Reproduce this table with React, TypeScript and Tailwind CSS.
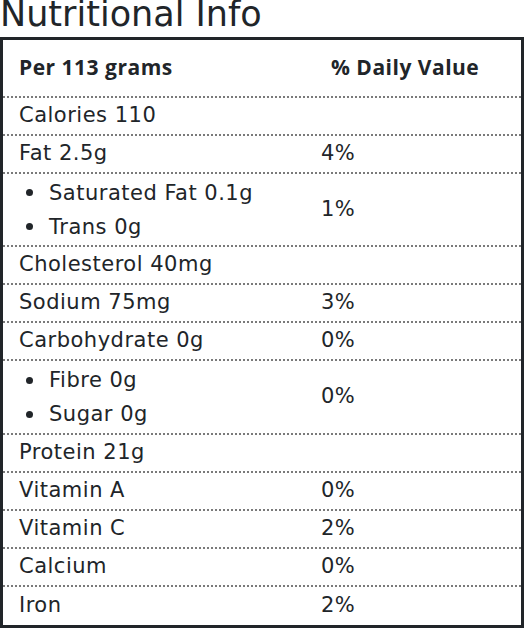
const rows: { name: string; items?: string[]; dv: string; h?: string }[] = [
  { name: "Calories 110", dv: "" },
  { name: "Fat 2.5g", dv: "4%" },
  { name: "", items: ["Saturated Fat 0.1g", "Trans 0g"], dv: "1%", h: "h-[73px]" },
  { name: "Cholesterol 40mg", dv: "" },
  { name: "Sodium 75mg", dv: "3%" },
  { name: "Carbohydrate 0g", dv: "0%" },
  { name: "", items: ["Fibre 0g", "Sugar 0g"], dv: "0%", h: "h-[74px]" },
  { name: "Protein 21g", dv: "" },
  { name: "Vitamin A", dv: "0%" },
  { name: "Vitamin C", dv: "2%" },
  { name: "Calcium", dv: "0%" },
  { name: "Iron", dv: "2%" },
];

const App = () => {
  return (
    <div className="w-[524px] h-[628px] bg-white text-[#212529] overflow-hidden font-['DejaVu_Sans',sans-serif]">
      <h1 className="h-[35px] text-[35px] leading-[35px] -mt-[3px] mb-[5px] whitespace-nowrap">
        Nutritional Info
      </h1>
      <div className="border-[3px] border-[#212529] w-[524px]">
        <div className="flex h-[58px] items-center border-b-2 border-dotted border-[#7a7a7a] font-bold text-[21px] tracking-[0.5px] font-['Open_Sans',sans-serif]">
          <div className="w-[302px] pl-4">Per 113 grams</div>
          <div className="flex-1 pl-[26px]">% Daily Value</div>
        </div>
        {rows.map((r, i) => (
          <div
            key={i}
            className={
              "flex items-center text-[21px] tracking-[0.5px] " +
              (i < rows.length - 1 ? "border-b-2 border-dotted border-[#7a7a7a] " : "") +
              (r.h ?? "h-[38px]")
            }
          >
            <div className="w-[302px] pl-4 whitespace-nowrap">
              {r.items ? (
                <ul>
                  {r.items.map((it) => (
                    <li key={it} className="flex items-center leading-[34px]">
                      <span className="ml-[7px] mr-[16px] w-[7px] h-[7px] rounded-full bg-[#212529]" />
                      {it}
                    </li>
                  ))}
                </ul>
              ) : (
                r.name
              )}
            </div>
            <div className="flex-1 pl-4">{r.dv}</div>
          </div>
        ))}
      </div>
    </div>
  );
};

export default App;
